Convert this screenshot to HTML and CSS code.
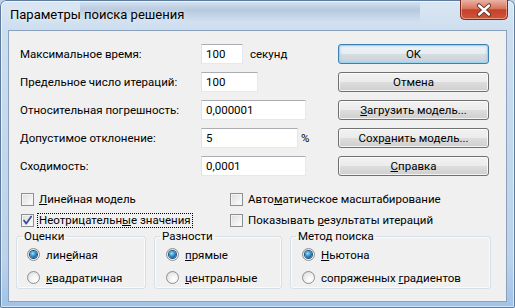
FILE: index.html
```html
<!DOCTYPE html>
<html lang="ru">
<head>
<meta charset="utf-8">
<title>Параметры поиска решения</title>
<link rel="stylesheet" href="styles.css">
</head>
<body>
<div class="window">
  <div class="titlebar">
    <span class="title">Параметры поиска решения</span>
    <div class="close">
      <svg width="48" height="20" viewBox="0 0 48 20">
        <defs>
          <linearGradient id="cg" x1="0" y1="0" x2="0" y2="1">
            <stop offset="0" stop-color="#eab3a4"/>
            <stop offset="0.45" stop-color="#d8735b"/>
            <stop offset="0.5" stop-color="#c5412a"/>
            <stop offset="1" stop-color="#d0563a"/>
          </linearGradient>
        </defs>
        <path d="M0.5 0 V15.5 Q0.5 19.5 4.5 19.5 H43.5 Q47.5 19.5 47.5 15.5 V0" fill="url(#cg)" stroke="#7a2b20" stroke-width="1"/>
        <path d="M1.5 1 V15 Q1.5 18.5 5 18.5 H43 Q46.5 18.5 46.5 15 V1" fill="none" stroke="#f3c4b6" stroke-opacity="0.6" stroke-width="1"/>
        <path d="M19 5.5 L29 14.5 M29 5.5 L19 14.5" stroke="#5a2a22" stroke-width="4.2" stroke-linecap="round"/>
        <path d="M19 5.5 L29 14.5 M29 5.5 L19 14.5" stroke="#ffffff" stroke-width="2.4" stroke-linecap="round"/>
      </svg>
    </div>
  </div>
  <div class="client">
    <div class="top">
      <div class="fields">
        <div class="row"><span class="label">Максимальное время:</span><span class="input w42">100</span><span class="suffix sec">секунд</span></div>
        <div class="row"><span class="label">Предельное число итераций:</span><span class="input w57">100</span></div>
        <div class="row"><span class="label">Относительная погрешность:</span><span class="input w105">0,000001</span></div>
        <div class="row"><span class="label">Допустимое отклонение:</span><span class="input w97">5</span><span class="suffix pct">%</span></div>
        <div class="row"><span class="label">Сходимость:</span><span class="input w105">0,0001</span></div>
      </div>
      <div class="buttons">
        <div class="btn default">OK</div>
        <div class="btn">Отмена</div>
        <div class="btn"><u>З</u>агрузить модель...</div>
        <div class="btn">Сохр<u>а</u>нить модель...</div>
        <div class="btn"><u>С</u>правка</div>
      </div>
    </div>
    <div class="checks">
      <div class="check"><span class="box"></span><span class="ctext"><u>Л</u>инейная модель</span></div>
      <div class="check"><span class="box"></span><span class="ctext">Авто<u>м</u>атическое масштабирование</span></div>
      <div class="check"><span class="box checked"><svg width="11" height="11" viewBox="0 0 11 11"><path d="M2 5.5 L4.3 8.6 L9.2 1.6" fill="none" stroke="#3d4f9a" stroke-width="1.8" stroke-linecap="round" stroke-linejoin="round"/></svg></span><span class="ctext focus">Неотрицательн<u>ы</u>е значения</span></div>
      <div class="check"><span class="box"></span><span class="ctext">Показывать <u>р</u>езультаты итераций</span></div>
    </div>
    <div class="groups">
      <fieldset class="group g1">
        <legend>Оценки</legend>
        <div class="opts">
          <div class="opt"><span class="radio on"></span><span>лин<u>е</u>йная</span></div>
          <div class="opt"><span class="radio"></span><span><u>к</u>вадратичная</span></div>
        </div>
      </fieldset>
      <fieldset class="group g2">
        <legend>Разности</legend>
        <div class="opts">
          <div class="opt"><span class="radio on"></span><span><u>п</u>рямые</span></div>
          <div class="opt"><span class="radio"></span><span><u>ц</u>ентральные</span></div>
        </div>
      </fieldset>
      <fieldset class="group g3">
        <legend>Метод поиска</legend>
        <div class="opts">
          <div class="opt"><span class="radio on"></span><span><u>Н</u>ьютона</span></div>
          <div class="opt"><span class="radio"></span><span>сопряженных <u>г</u>радиентов</span></div>
        </div>
      </fieldset>
    </div>
  </div>
</div>
</body>
</html>
```

FILE: styles.css
```css
html, body {
  margin: 0;
  padding: 0;
  background: #bcd2e9;
}

.window {
  width: 515px;
  height: 308px;
  box-sizing: border-box;
  display: flex;
  flex-direction: column;
  font-family: Roboto, "Noto Sans", sans-serif;
  font-size: 11.5px;
  color: #000;
  background:
    linear-gradient(to bottom, rgba(255,255,255,0) 0, rgba(120,150,185,0.35) 10px, rgba(255,255,255,0) 22px) 80px 0 / 340px 30px no-repeat,
    linear-gradient(to bottom, #dbe7f3 0, #cddeef 30px, #bcd2ea 260px, #9fc3e8 100%);
  border-radius: 6px 6px 2px 2px;
  box-shadow: inset 0 0 0 1px #5d7c9e, inset 0 0 0 2px rgba(255,255,255,0.55);
}

.titlebar {
  height: 30px;
  display: flex;
  align-items: flex-start;
  padding-left: 10px;
  flex-shrink: 0;
}

.title {
  font-size: 13px;
  padding-top: 7px;
  color: #000;
  text-shadow: 0 0 6px rgba(255,255,255,0.9);
}

.close {
  margin-left: auto;
  margin-right: 7px;
  height: 20px;
  line-height: 0;
}

.client {
  margin: 0 8px;
  height: 272px;
  box-sizing: border-box;
  background: #f0f0f0;
  border: 1px solid #8ba1bb;
  flex-shrink: 0;
}

.top {
  display: flex;
  padding: 13px 17px 0 11px;
}

.fields {
  flex: 1;
  display: flex;
  flex-direction: column;
  gap: 8px;
}

.row {
  display: flex;
  align-items: center;
  height: 20px;
}

.label {
  width: 181px;
  flex-shrink: 0;
}

.input {
  height: 20px;
  box-sizing: border-box;
  background: #fff;
  border: 1px solid #e3e9ef;
  border-top-color: #abadb3;
  border-left-color: #e2e3ea;
  padding-left: 4px;
  line-height: 18px;
}

.w42 { width: 42px; }
.w57 { width: 57px; }
.w105 { width: 105px; }
.w97 { width: 97px; }

.sec { margin-left: 7px; }
.pct { margin-left: 3px; }

.buttons {
  width: 151px;
  display: flex;
  flex-direction: column;
  gap: 8px;
}

.btn {
  height: 20px;
  box-sizing: border-box;
  border: 1px solid #707070;
  border-radius: 3px;
  background: linear-gradient(to bottom, #f2f2f2 0, #ebebeb 50%, #dddddd 50%, #cfcfcf 100%);
  box-shadow: inset 0 0 0 1px rgba(255,255,255,0.75);
  text-align: center;
  line-height: 18px;
}

.btn.default {
  border-color: #3c7fb1;
  box-shadow: inset 0 0 0 1px #9bd3f0, inset 0 0 3px 1px rgba(140,200,240,0.6);
  background: linear-gradient(to bottom, #f0f4f7 0, #e7ecef 50%, #d6dde2 50%, #cbd3d9 100%);
}

.checks {
  display: grid;
  grid-template-columns: 209px 1fr;
  row-gap: 8px;
  margin-top: 17px;
  padding-left: 12px;
}

.check {
  display: flex;
  align-items: center;
  height: 13px;
}

.box {
  width: 13px;
  height: 13px;
  box-sizing: border-box;
  border: 1px solid #8e8f8f;
  background: linear-gradient(135deg, #dcdcdc 0, #f4f4f4 70%, #ffffff 100%);
  box-shadow: inset 0 0 0 1px #f4f4f4;
  flex-shrink: 0;
  display: flex;
  align-items: center;
  justify-content: center;
}

.box svg { display: block; }

.ctext {
  margin-left: 5px;
  white-space: nowrap;
  line-height: 13px;
}

.ctext.focus {
  outline: 1px dotted #000;
  outline-offset: 0;
  padding: 0 1px;
  margin-left: 4px;
}

.groups {
  display: flex;
  gap: 8px;
  margin-top: 2px;
  padding-left: 7px;
}

.group {
  margin: 0;
  padding: 0;
  border: 1px solid #d5dfe5;
  border-radius: 3px;
  box-shadow: inset 0 0 0 1px #fbfbfb;
  min-width: 0;
}

.g1 { width: 130px; box-sizing: border-box; }
.g2 { width: 128px; box-sizing: border-box; }
.g3 { width: 201px; box-sizing: border-box; }

.group legend {
  margin-left: 5px;
  padding: 0 2px;
  line-height: 14px;
}

.opts {
  display: flex;
  flex-direction: column;
  gap: 10px;
  padding: 5px 0 4px 10px;
}

.g2 .opts, .g3 .opts { padding-left: 11px; }

.opt {
  display: flex;
  align-items: center;
  height: 13px;
  gap: 6px;
  white-space: nowrap;
}

.radio {
  width: 13px;
  height: 13px;
  box-sizing: border-box;
  border-radius: 50%;
  border: 1px solid #8e8f8f;
  background: radial-gradient(circle at 65% 70%, #ffffff 0, #f2f2f2 45%, #d2d2d2 100%);
  flex-shrink: 0;
  display: flex;
  align-items: center;
  justify-content: center;
}

.radio.on::after {
  content: "";
  width: 7px;
  height: 7px;
  border-radius: 50%;
  background: radial-gradient(circle at 40% 35%, #9ee5fb 0, #3fa2d9 35%, #1f5f99 70%, #143f6c 100%);
  box-shadow: 0 0 0 1px #1d4b77;
}
```
